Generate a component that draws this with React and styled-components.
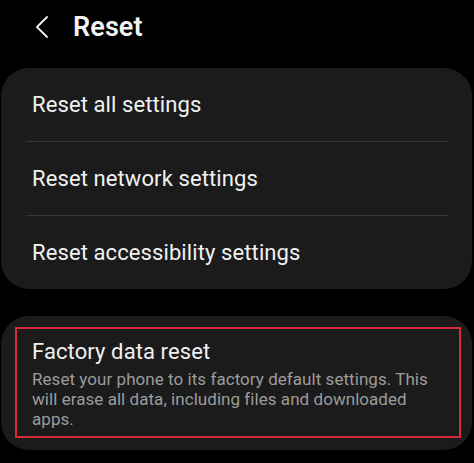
import styled, { createGlobalStyle } from "styled-components";

const GlobalStyle = createGlobalStyle`
  html, body {
    margin: 0;
    padding: 0;
    background: #000;
  }
  body {
    font-family: Roboto, "Liberation Sans", sans-serif;
    -webkit-font-smoothing: antialiased;
  }
`;

const Page = styled.div`
  width: 474px;
  height: 463px;
  background: #000;
  padding: 0 2px 0 1px;
  box-sizing: border-box;
  overflow: hidden;
`;

const Header = styled.header`
  display: flex;
  align-items: center;
  height: 54px;
  padding-left: 33px;
  gap: 23px;
`;

const BackButton = styled.button`
  display: flex;
  align-items: center;
  justify-content: center;
  background: none;
  border: none;
  padding: 0;
  color: #f2f2f2;
  cursor: pointer;
`;

const Title = styled.h1`
  margin: 0;
  font-size: 27px;
  font-weight: 600;
  color: #f4f4f4;
  letter-spacing: 0.1px;
`;

const Card = styled.section`
  background: #1b1b1b;
  border-radius: 28px;
  margin-top: ${(p) => p.$top}px;
  overflow: hidden;
`;

const Row = styled.div`
  position: relative;
  display: flex;
  align-items: center;
  height: 73px;
  padding-left: 31px;
  font-size: 22px;
  color: #f1f1f1;
  letter-spacing: 0.1px;

  & + & {
    height: 74px;
  }

  & + &::before {
    content: "";
    position: absolute;
    top: 0;
    left: 25px;
    right: 24px;
    height: 1px;
    background: #363636;
  }
`;

const Highlight = styled.div`
  margin: 11px 11px 12px 14px;
  border: 2px solid #d42b37;
  padding: 10px 14px 7px 15px;
  height: 111px;
  box-sizing: border-box;
`;

const ItemTitle = styled.div`
  font-size: 22px;
  line-height: 25px;
  color: #f1f1f1;
  letter-spacing: 0.1px;
`;

const ItemDesc = styled.p`
  margin: 5px 0 0;
  font-size: 17px;
  line-height: 20px;
  color: #9c9c9c;
  letter-spacing: 0.05px;
`;

function Chevron() {
  return (
    <svg width="16" height="24" viewBox="0 0 16 24" fill="none">
      <path
        d="M13 2 L3 12 L13 22"
        stroke="currentColor"
        strokeWidth="1.8"
        strokeLinecap="round"
        strokeLinejoin="round"
      />
    </svg>
  );
}

const options = [
  "Reset all settings",
  "Reset network settings",
  "Reset accessibility settings",
];

export default function App() {
  return (
    <Page>
      <GlobalStyle />
      <Header>
        <BackButton aria-label="Back">
          <Chevron />
        </BackButton>
        <Title>Reset</Title>
      </Header>
      <Card $top={14}>
        {options.map((label) => (
          <Row key={label}>{label}</Row>
        ))}
      </Card>
      <Card $top={27}>
        <Highlight>
          <ItemTitle>Factory data reset</ItemTitle>
          <ItemDesc>
            Reset your phone to its factory default settings. This will erase
            all data, including files and downloaded apps.
          </ItemDesc>
        </Highlight>
      </Card>
    </Page>
  );
}
